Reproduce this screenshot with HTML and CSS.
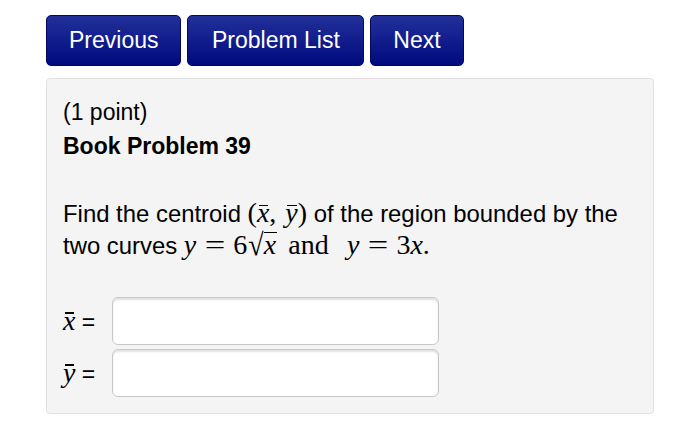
FILE: index.html
```html
<!DOCTYPE html>
<html lang="en">
<head>
    <meta charset="UTF-8">
    <title>Book Problem 39</title>
    <link rel="stylesheet" href="styles.css">
</head>
<body>

<div class="nav">
    <button class="nav-btn">Previous</button>
    <button class="nav-btn">Problem List</button>
    <button class="nav-btn">Next</button>
</div>

<div class="problem">
    <p class="points">(1 point)</p>
    <p class="title">Book Problem 39</p>

    <p class="text">
        Find the centroid <span class="math">(<i class="bar">x</i><span class="comma">,</span><i class="bar">y</i>)</span> of the region bounded by the
        two curves <span class="math"><i>y</i><span class="mo">=</span>6<span class="radic">&radic;</span><i class="rad">x</i><span class="mtext">and</span><i>y</i><span class="mo">=</span>3<i>x</i>.</span>
    </p>

    <div class="answer">
        <span class="label"><span class="math"><i class="bar">x</i></span> =</span>
        <input type="text" class="answer-box">
    </div>
    <div class="answer">
        <span class="label"><span class="math"><i class="bar">y</i></span> =</span>
        <input type="text" class="answer-box">
    </div>
</div>

</body>
</html>
```

FILE: styles.css
```css
body { margin: 0; padding: 15px 46px; font-family: "Liberation Sans", Arial, sans-serif; background: #fff; color: #000; }
.nav { display: flex; gap: 6px; }
.nav-btn { height: 51px; padding: 0 22px; font-family: "Liberation Sans", Arial, sans-serif; font-size: 23px; color: #fff; border: 1px solid #06065e; border-radius: 5px; background: linear-gradient(#22309a, #000a7e); cursor: pointer; }
.nav-btn:nth-child(2) { padding: 0 23.5px; }
.problem { margin-top: 12px; width: 608px; box-sizing: border-box; padding: 16px; background: #f4f4f4; border: 1px solid #e2e2e2; border-radius: 4px; }
.points, .title { margin: 0; font-size: 23px; line-height: 34px; }
.title { font-weight: bold; }
.text { margin: 35px 0 0; font-size: 23.9px; line-height: 32px; }

.math { font-family: "Liberation Serif", "Times New Roman", serif; font-size: 28px; line-height: 1; }
.bar { display: inline-block; position: relative; }
.bar::before { content: ""; position: absolute; left: 2px; right: 1px; top: 0.2em; height: 1.5px; background: #000; }
.comma { margin-right: 0.32em; }
.mo { display: inline-block; margin: 0 0.38em; transform: scaleX(1.3); }
.radic { display: inline-block; margin-left: 1px; transform: scaleY(1.1); }
.rad { display: inline-block; border-top: 1.5px solid #000; line-height: 0.8; padding: 1px 1px 0 0; }
.mtext { margin: 0 0.65em 0 0.4em; }

.answer { display: flex; align-items: center; margin-top: 4px; }
.answer:first-of-type { margin-top: 35px; }
.label { font-size: 23px; width: 49px; }
.answer-box { width: 327px; height: 48px; box-sizing: border-box; border: 1px solid #c8c8c8; border-radius: 6px; background: #fff; box-shadow: inset 0 2px 2px rgba(0, 0, 0, 0.12); }
```
